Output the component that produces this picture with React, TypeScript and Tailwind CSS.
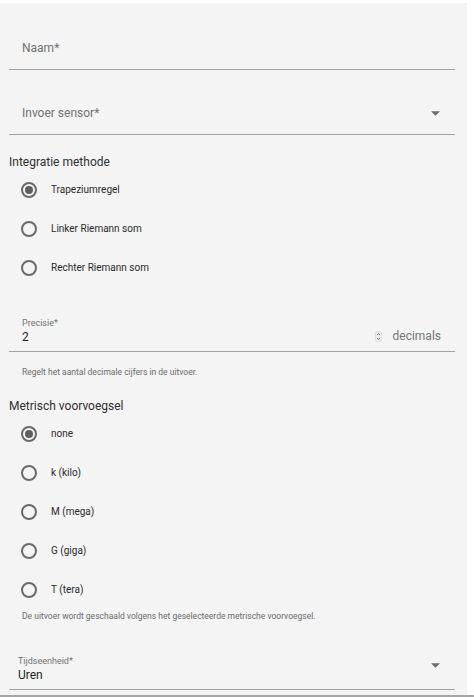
import React from 'react';

const Caret = () => (
  <svg width="9" height="5" viewBox="0 0 10 5" className="shrink-0">
    <path d="M0 0 L10 0 L5 5 Z" fill="#6b6b6b" />
  </svg>
);

const Radio = ({ label, checked }: { label: string; checked?: boolean }) => (
  <div className="flex h-[39px] items-center pl-[12px]">
    <span className="flex h-[16px] w-[16px] items-center justify-center rounded-full border-2 border-[#6a6a6a]">
      {checked && <span className="h-[8px] w-[8px] rounded-full bg-[#5f5f5f]" />}
    </span>
    <span className="ml-[14px] text-[10px] text-[#2a2a2a]">{label}</span>
  </div>
);

const Section = ({ title }: { title: string }) => (
  <div className="h-[16px] text-[12px] leading-[16px] text-[#303030]">{title}</div>
);

const Helper = ({ text }: { text: string }) => (
  <div className="h-[12px] pl-[13px] text-[8.5px] leading-[12px] text-[#6b6b6b]">{text}</div>
);

export default function App() {
  return (
    <div className="min-h-[697px] w-[474px] bg-white pt-[3px] font-['Roboto',sans-serif]">
      <div className="mr-[7px] bg-[#f4f4f4] pb-[5px] pl-[9px] pr-[12px]">
        {/* Naam */}
        <div className="pt-[24px]">
          <div className="flex h-[43px] items-center border-b border-[#a3a3a3] px-[13px] text-[12px] text-[#727272]">
            Naam*
          </div>
        </div>

        {/* Invoer sensor */}
        <div className="pt-[22px]">
          <div className="flex h-[43px] items-center justify-between border-b border-[#a3a3a3] pl-[13px] pr-[15px] text-[12px] text-[#727272]">
            <span>Invoer sensor*</span>
            <Caret />
          </div>
        </div>

        <div className="pt-[19px]">
          <Section title="Integratie methode" />
          <Radio label="Trapeziumregel" checked />
          <Radio label="Linker Riemann som" />
          <Radio label="Rechter Riemann som" />
        </div>

        {/* Precisie */}
        <div className="pt-[21px]">
          <div className="flex h-[44px] items-end border-b border-[#a3a3a3] pb-[7px] pl-[13px] pr-[14px]">
            <div className="flex flex-1 flex-col">
              <span className="text-[9px] leading-[10px] text-[#727272]">Precisie*</span>
              <span className="mt-[2px] text-[12px] leading-[14px] text-[#1e1e1e]">2</span>
            </div>
            <div className="mb-[1px] flex items-center">
              <svg width="7" height="11" viewBox="0 0 7 11" className="mr-[11px]">
                <rect x="0.5" y="0.5" width="6" height="10" rx="2" fill="#ececec" stroke="#d2d2d2" strokeWidth="0.6" />
                <path d="M2 4 L3.5 2.6 L5 4" fill="none" stroke="#555" strokeWidth="0.8" />
                <path d="M2 7 L3.5 8.4 L5 7" fill="none" stroke="#555" strokeWidth="0.8" />
              </svg>
              <span className="text-[12px] leading-[14px] text-[#777]">decimals</span>
            </div>
          </div>
        </div>

        <div className="pt-[14px]">
          <Helper text="Regelt het aantal decimale cijfers in de uitvoer." />
        </div>

        <div className="pt-[20px]">
          <Section title="Metrisch voorvoegsel" />
          <Radio label="none" checked />
          <Radio label="k (kilo)" />
          <Radio label="M (mega)" />
          <Radio label="G (giga)" />
          <Radio label="T (tera)" />
        </div>

        <div className="pt-[1px]">
          <Helper text="De uitvoer wordt geschaald volgens het geselecteerde metrische voorvoegsel." />
        </div>

        {/* Tijdseenheid */}
        <div className="pt-[25px]">
          <div className="flex h-[43px] items-end border-b border-[#a3a3a3] pb-[7px] pl-[9px] pr-[15px]">
            <div className="flex flex-1 flex-col">
              <span className="text-[9px] leading-[10px] text-[#727272]">Tijdseenheid*</span>
              <span className="mt-[2px] text-[12px] leading-[14px] text-[#1e1e1e]">Uren</span>
            </div>
            <div className="mb-[14px]">
              <Caret />
            </div>
          </div>
        </div>
      </div>
      <div className="h-[4px] bg-[#a6a6a6]" />
    </div>
  );
}
